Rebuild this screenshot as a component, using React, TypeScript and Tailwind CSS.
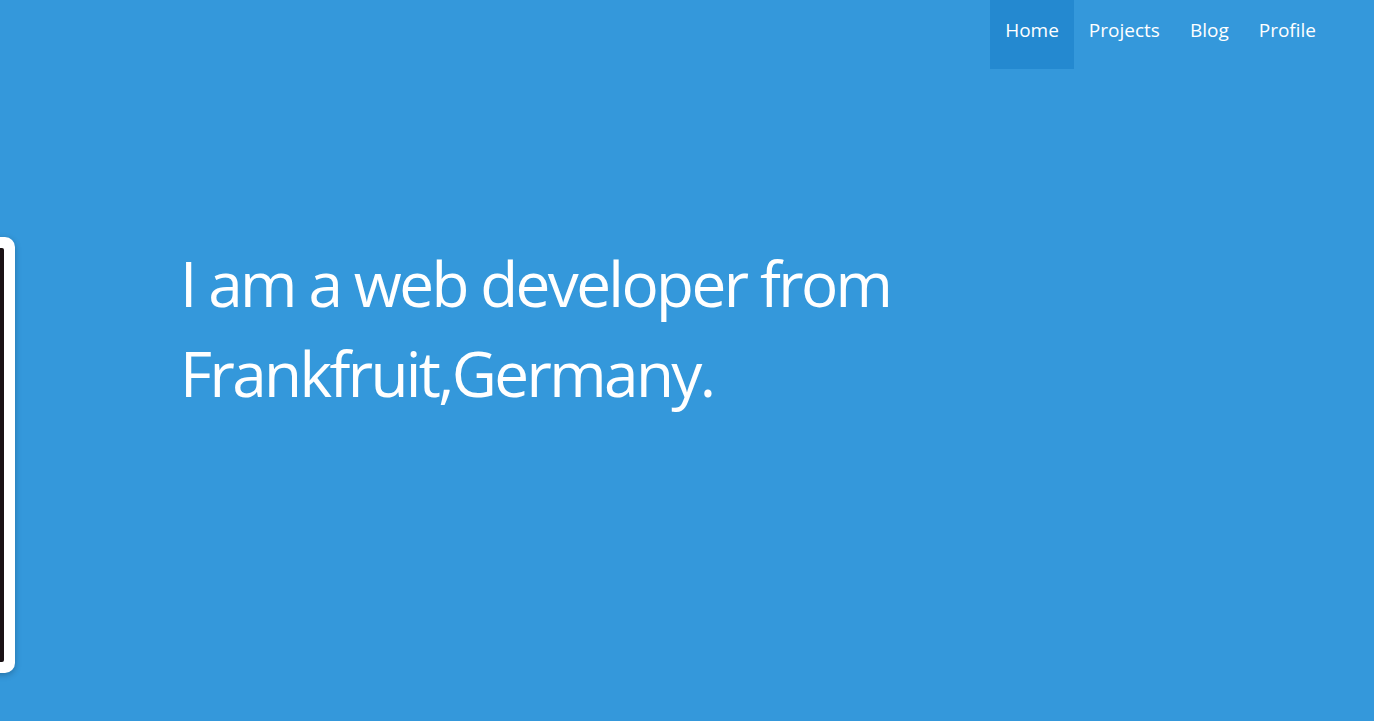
import React from 'react'

const NAV = ['Home', 'Projects', 'Blog', 'Profile']

export default function App() {
  return (
    <div className="min-h-screen bg-[#3498db] text-white overflow-hidden font-['Open_Sans','Noto_Sans',sans-serif]">
      {/* --- Header / navigation --- */}
      <header className="flex justify-end pr-[43px]">
        <nav className="flex">
          {NAV.map((item, i) => (
            <a
              key={item}
              href="#"
              className={
                i === 0
                  ? 'h-[69px] px-[15px] pt-[16px] text-[19px] leading-[28px] bg-[#2489d0]'
                  : 'h-[69px] px-[15px] pt-[16px] text-[19px] leading-[28px]'
              }
            >
              {item}
            </a>
          ))}
        </nav>
      </header>

      {/* --- Hero --- */}
      <main className="flex items-start">
        {/* Cadre (écran) qui dépasse à gauche */}
        <div className="-ml-[200px] mt-[168px] w-[215px] h-[436px] shrink-0 rounded-[10px] bg-white p-[11px] shadow-[0_2px_6px_rgba(0,0,0,0.25)]">
          <div className="h-full w-full rounded-[2px] bg-[#1a1114]" />
        </div>

        <h1 className="ml-[165px] mt-[169px] w-[760px] text-[62px] leading-[90px] tracking-[-2.6px] font-normal">
          I am a web developer from Frankfruit,Germany.
        </h1>
      </main>
    </div>
  )
}
